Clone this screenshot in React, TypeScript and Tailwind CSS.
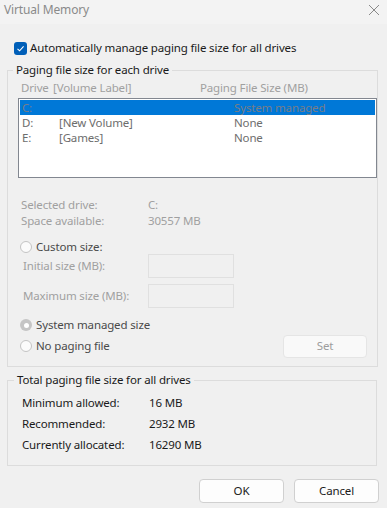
import React from "react";

function Radio({ checked = false }: { checked?: boolean }) {
  if (checked) {
    return (
      <span className="flex h-[12px] w-[12px] shrink-0 items-center justify-center rounded-full bg-[#c5c5c5]">
        <span className="h-[5px] w-[5px] rounded-full bg-white" />
      </span>
    );
  }
  return <span className="h-[12px] w-[12px] shrink-0 rounded-full border border-[#c4c4c4] bg-[#fbfbfb]" />;
}

export default function App() {
  return (
    <div className="flex h-[508px] w-[387px] flex-col overflow-hidden bg-[#f0f0f0] font-['Segoe_UI','Noto_Sans',sans-serif] text-[11.5px] leading-[16px] tracking-[-0.15px] text-[#1a1a1a]">
      {/* Title bar */}
      <div className="flex h-[24px] shrink-0 items-start justify-between bg-[#f3f3f3] pl-[4px] pr-[7px] pt-[2px]">
        <span className="text-[12px] text-[#8a8a8a]">Virtual Memory</span>
        <svg width="12" height="12" viewBox="0 0 12 12" className="mt-[2px]">
          <path d="M1 1 L11 11 M11 1 L1 11" stroke="#8a8a8a" strokeWidth="1" fill="none" />
        </svg>
      </div>

      {/* Auto checkbox */}
      <div className="mt-[16px] flex h-[16px] items-center pl-[14px]">
        <span className="flex h-[13px] w-[13px] items-center justify-center rounded-[3px] bg-[#005fb8]">
          <svg width="9" height="9" viewBox="0 0 9 9">
            <path d="M1.5 4.8 L3.6 6.8 L7.6 2.3" stroke="#ffffff" strokeWidth="1.1" fill="none" />
          </svg>
        </span>
        <span className="ml-[3px]">Automatically manage paging file size for all drives</span>
      </div>

      {/* Group 1 */}
      <fieldset className="ml-[7px] mt-[6px] w-[370px] border border-[#dcdcdc] pb-[8px]">
        <legend className="ml-[5px] px-[3px] leading-[16px]">Paging file size for each drive</legend>

        <div className="mt-[2px] ml-[13px] flex h-[16px] items-center text-[#a0a0a0]">
          <span className="w-[32px]">Drive</span>
          <span className="w-[147px]">[Volume Label]</span>
          <span>Paging File Size (MB)</span>
        </div>

        <div className="ml-[10px] mt-[2px] h-[80px] w-[359px] border border-[#828790] bg-white p-[1px] leading-[15px]">
          <div className="flex h-[15px] items-center bg-[#0078d7] pl-[2px] text-[#787d87]">
            <span className="w-[37px]">C:</span>
            <span className="w-[175px]"></span>
            <span>System managed</span>
          </div>
          <div className="flex h-[15px] items-center pl-[2px] text-[#6d6d6d]">
            <span className="w-[37px]">D:</span>
            <span className="w-[175px]">[New Volume]</span>
            <span>None</span>
          </div>
          <div className="flex h-[15px] items-center pl-[2px] text-[#6d6d6d]">
            <span className="w-[37px]">E:</span>
            <span className="w-[175px]">[Games]</span>
            <span>None</span>
          </div>
        </div>

        <div className="ml-[13px] mt-[19px] grid grid-cols-[127px_1fr] text-[#a0a0a0]">
          <span className="h-[16px]">Selected drive:</span>
          <span className="h-[16px]">C:</span>
          <span className="h-[16px]">Space available:</span>
          <span className="h-[16px]">30557 MB</span>
        </div>

        <div className="ml-[12px] mt-[11px] flex h-[14px] items-center">
          <Radio />
          <span className="ml-[4px] text-[#4a4a4a]">Custom size:</span>
        </div>

        <div className="ml-[15px] flex h-[24px] items-center text-[#a0a0a0]">
          <span className="w-[125px]">Initial size (MB):</span>
          <span className="h-[24px] w-[86px] border border-[#e0e0e0] bg-[#f0f0f0]" />
        </div>
        <div className="ml-[15px] mt-[6px] flex h-[24px] items-center text-[#a0a0a0]">
          <span className="w-[125px]">Maximum size (MB):</span>
          <span className="h-[24px] w-[86px] border border-[#e0e0e0] bg-[#f0f0f0]" />
        </div>

        <div className="ml-[12px] mt-[10px] flex h-[14px] items-center">
          <Radio checked />
          <span className="ml-[4px] text-[#4a4a4a]">System managed size</span>
        </div>

        <div className="ml-[12px] mr-[10px] mt-[2px] flex h-[24px] items-center justify-between">
          <div className="flex items-center">
            <Radio />
            <span className="ml-[4px] text-[#4a4a4a]">No paging file</span>
          </div>
          <span className="flex h-[23px] w-[84px] items-center justify-center rounded-[4px] border border-[#e5e5e5] bg-[#f9f9f9] text-[#9d9d9d]">
            Set
          </span>
        </div>
      </fieldset>

      {/* Group 2 */}
      <fieldset className="ml-[7px] mt-[5px] w-[370px] border border-[#dcdcdc] pb-[10px]">
        <legend className="ml-[6px] px-[3px] leading-[16px]">Total paging file size for all drives</legend>
        <div className="ml-[14px] mt-[4px] grid grid-cols-[127px_1fr] auto-rows-[21px] items-center">
          <span>Minimum allowed:</span>
          <span>16 MB</span>
          <span>Recommended:</span>
          <span>2932 MB</span>
          <span>Currently allocated:</span>
          <span>16290 MB</span>
        </div>
      </fieldset>

      {/* Buttons */}
      <div className="mr-[8px] mt-[13px] flex justify-end gap-[10px]">
        <button className="flex h-[24px] w-[85px] items-center justify-center rounded-[4px] border border-[#d0d0d0] bg-[#fdfdfd] text-[#1a1a1a]">
          OK
        </button>
        <button className="flex h-[24px] w-[85px] items-center justify-center rounded-[4px] border border-[#d0d0d0] bg-[#fdfdfd] text-[#1a1a1a]">
          Cancel
        </button>
      </div>
    </div>
  );
}
